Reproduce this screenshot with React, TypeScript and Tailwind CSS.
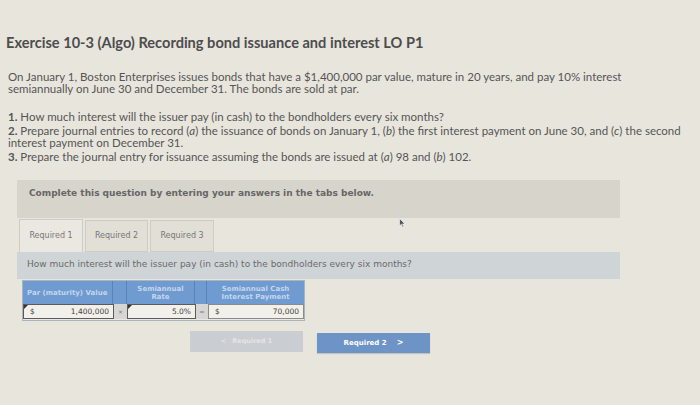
import React from 'react';

const sans = { fontFamily: 'Lato, "Open Sans", sans-serif' };
const verdana = { fontFamily: '"DejaVu Sans", Verdana, sans-serif' };

function InputCell({ prefix, value, width }: { prefix?: string; value: string; width: string }) {
  return (
    <div className={`relative flex items-center h-[15px] border border-[#5a5a5a] bg-[#f2f0eb] px-[4px] text-[7.5px] text-[#444] ${width}`}>
      <span className="absolute left-0 top-0 w-0 h-0 border-t-[4px] border-r-[4px] border-t-[#333] border-r-transparent" />
      {prefix && <span className="ml-[2px]">{prefix}</span>}
      <span className="ml-auto">{value}</span>
    </div>
  );
}

function OpCell({ sym, width }: { sym: string; width: string }) {
  return (
    <div className={`flex items-center justify-center h-[15px] bg-[#d6d6d4] text-[6px] text-[#777] ${width}`}>{sym}</div>
  );
}

export default function App() {
  return (
    <div className="relative w-[700px] h-[405px] overflow-hidden bg-[#e8e5dd] pt-[34px] text-[#505050]">
      <h1 className="pl-[6px] text-[14.6px] leading-[17px] font-bold text-[#4d4d4d]" style={sans}>
        Exercise 10-3 (Algo) Recording bond issuance and interest LO P1
      </h1>

      <div className="pl-[8px] text-[11.5px] leading-[12px] text-[#555] whitespace-nowrap" style={sans}>
        <p className="mt-[20px]">
          On January 1, Boston Enterprises issues bonds that have a $1,400,000 par value, mature in 20 years, and pay 10% interest
          <br />
          semiannually on June 30 and December 31. The bonds are sold at par.
        </p>
        <ol className="mt-[16px] flex flex-col gap-[2px]">
          <li>
            <span className="font-bold">1.</span> How much interest will the issuer pay (in cash) to the bondholders every six months?
          </li>
          <li>
            <span className="font-bold">2.</span> Prepare journal entries to record (<i>a</i>) the issuance of bonds on January 1, (<i>b</i>) the first interest payment on June 30, and (<i>c</i>) the second
            <br />
            interest payment on December 31.
          </li>
          <li>
            <span className="font-bold">3.</span> Prepare the journal entry for issuance assuming the bonds are issued at (<i>a</i>) 98 and (<i>b</i>) 102.
          </li>
        </ol>
      </div>

      <div className="ml-[17px] w-[603px] mt-[17px]" style={verdana}>
        <div className="h-[38px] bg-[#d7d4cc] pl-[12px] pt-[8px] text-[9px] leading-[11px] font-bold text-[#666] whitespace-nowrap">
          Complete this question by entering your answers in the tabs below.
        </div>

        <div className="flex items-end gap-[2px] pl-[2px] mt-[1px] h-[33px]">
          <div className="flex h-[33px] w-[64px] items-center justify-center border border-b-0 border-[#cfccc4] bg-[#ebe8e1] text-[8px] text-[#777] whitespace-nowrap">
            Required 1
          </div>
          <div className="flex h-[32px] w-[63px] items-center justify-center border border-[#cfccc4] bg-[#e2dfd7] text-[8px] text-[#777] whitespace-nowrap">
            Required 2
          </div>
          <div className="flex h-[32px] w-[64px] items-center justify-center border border-[#cfccc4] bg-[#e2dfd7] text-[8px] text-[#777] whitespace-nowrap">
            Required 3
          </div>
        </div>

        <div className="h-[27px] bg-[#cfd4d7] pl-[10px] pt-[7px] text-[9px] leading-[11px] text-[#6a6a6a] whitespace-nowrap">
          How much interest will the issuer pay (in cash) to the bondholders every six months?
        </div>

        <div className="ml-[5px] mt-[1px] w-[283px] border border-[#a9b4c0] bg-[#a9b7c6]">
          <div className="flex h-[23px] bg-[#6f9bd1] text-[7px] leading-[8px] text-[#c3d6ec] font-bold">
            <div className="flex w-[90px] items-center pl-[4px] border-r border-[#5a84b8] whitespace-nowrap">Par (maturity) Value</div>
            <div className="w-[14px] border-r border-[#5a84b8]" />
            <div className="flex w-[68px] items-center justify-center text-center border-r border-[#5a84b8]">Semiannual<br />Rate</div>
            <div className="w-[12px] border-r border-[#5a84b8]" />
            <div className="flex flex-1 items-center justify-center text-center">Semiannual Cash<br />Interest Payment</div>
          </div>
          <div className="flex bg-[#e9e8e4] pb-[1px]">
            <InputCell prefix="$" value="1,400,000" width="w-[91px]" />
            <OpCell sym="×" width="w-[13px]" />
            <InputCell value="5.0%" width="w-[69px]" />
            <OpCell sym="=" width="w-[12px]" />
            <div className="flex flex-1 items-center h-[15px] border border-[#8a8a8a] bg-[#f2f0eb] px-[4px] text-[7.5px] text-[#444]">
              <span className="ml-[2px]">$</span>
              <span className="ml-auto">70,000</span>
            </div>
          </div>
        </div>

        <div className="flex items-start gap-[14px] ml-[173px] mt-[10px]">
          <div className="flex h-[21px] w-[113px] items-center justify-center gap-[6px] bg-[#cacdd1] text-[6.5px] font-bold text-[#e3e5e8]">
            <span>&lt;</span>
            <span>Required 1</span>
          </div>
          <div className="mt-[2px] flex h-[20px] w-[113px] items-center justify-center gap-[10px] bg-[#6e93c6] text-[7px] font-bold text-white shadow-[0_1px_1px_rgba(0,0,0,0.15)]">
            <span>Required 2</span>
            <span className="text-[8px]">&gt;</span>
          </div>
        </div>
      </div>

      <svg className="absolute left-[399px] top-[218px]" width="7" height="10" viewBox="0 0 7 10">
        <path d="M0.5 0.5 L0.5 8 L2.3 6.3 L3.6 9.3 L4.8 8.8 L3.5 5.9 L6 5.9 Z" fill="#555" stroke="#fff" strokeWidth="0.6" />
      </svg>
    </div>
  );
}
